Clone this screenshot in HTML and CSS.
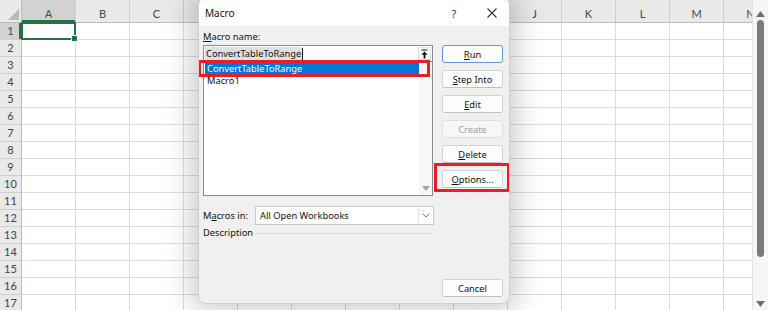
FILE: index.html
```html
<!DOCTYPE html>
<html lang="en">
<head>
    <meta charset="UTF-8">
    <meta name="viewport" content="width=device-width, initial-scale=1.0">
    <title>Macro</title>
    <link rel="stylesheet" href="styles.css">
</head>
<body>
    <div class="excel">
        <div class="sheet">
            <div class="corner">
                <svg width="12" height="12" viewBox="0 0 12 12"><polygon points="12,1 12,12 1,12" fill="#b9b9b9"/></svg>
            </div>
            <div class="col-heads">
                <div class="ch active">A</div>
                <div class="ch">B</div>
                <div class="ch">C</div>
                <div class="ch">D</div>
                <div class="ch">E</div>
                <div class="ch">F</div>
                <div class="ch">G</div>
                <div class="ch">H</div>
                <div class="ch">I</div>
                <div class="ch">J</div>
                <div class="ch">K</div>
                <div class="ch">L</div>
                <div class="ch">M</div>
                <div class="ch">N</div>
            </div>
            <div class="row-heads">
                <div class="rh active">1</div>
                <div class="rh">2</div>
                <div class="rh">3</div>
                <div class="rh">4</div>
                <div class="rh">5</div>
                <div class="rh">6</div>
                <div class="rh">7</div>
                <div class="rh">8</div>
                <div class="rh">9</div>
                <div class="rh">10</div>
                <div class="rh">11</div>
                <div class="rh">12</div>
                <div class="rh">13</div>
                <div class="rh">14</div>
                <div class="rh">15</div>
                <div class="rh">16</div>
                <div class="rh">17</div>
            </div>
            <div class="cells">
                <div class="active-cell"><span class="handle"></span></div>
            </div>
        </div>
        <div class="vscroll">
            <svg class="arr" width="9" height="6" viewBox="0 0 9 6"><polygon points="4.5,0 9,6 0,6" fill="#6e6e6e"/></svg>
            <div class="thumb"></div>
            <svg class="arr down" width="9" height="6" viewBox="0 0 9 6"><polygon points="0,0 9,0 4.5,6" fill="#6e6e6e"/></svg>
        </div>
    </div>

    <div class="dialog">
        <div class="titlebar">
            <span class="title">Macro</span>
            <div class="title-tools">
                <span class="tbtn help">?</span>
                <span class="tbtn">
                    <svg width="10" height="10" viewBox="0 0 10 10"><path d="M0.5 0.5 L9.5 9.5 M9.5 0.5 L0.5 9.5" stroke="#333" stroke-width="1.1" fill="none"/></svg>
                </span>
            </div>
        </div>
        <div class="dialog-body">
            <div class="left">
                <div class="label"><u>M</u>acro name:</div>
                <div class="name-input">
                    <span class="value"><span class="sel">ConvertTableToRange</span><span class="caret"></span></span>
                    <span class="pick">
                        <svg width="9" height="10" viewBox="0 0 9 10"><path d="M1.5 1 H7.5" stroke="#111" stroke-width="1.2"/><path d="M4.5 2.4 L1.4 5.8 H3.6 V9.5 H5.4 V5.8 H7.6 Z" fill="#111"/></svg>
                    </span>
                </div>
                <div class="macro-list">
                    <div class="items">
                        <div class="item selected marked">ConvertTableToRange</div>
                        <div class="item">Macro1</div>
                    </div>
                    <div class="lscroll">
                        <svg width="8" height="5" viewBox="0 0 8 5"><polygon points="0,0 8,0 4,5" fill="#a5a5a5"/></svg>
                    </div>
                </div>
                <div class="field">
                    <span class="field-label">M<u>a</u>cros in:</span>
                    <div class="select">
                        <span class="select-value">All Open Workbooks</span>
                        <span class="chevron">
                            <svg width="8" height="5" viewBox="0 0 8 5"><polyline points="0.5,0.5 4,4 7.5,0.5" stroke="#777" stroke-width="1" fill="none"/></svg>
                        </span>
                    </div>
                </div>
                <div class="field desc">
                    <span class="field-label">Description</span>
                    <span class="rule"></span>
                </div>
            </div>
            <div class="buttons">
                <button class="btn default"><u>R</u>un</button>
                <button class="btn"><u>S</u>tep Into</button>
                <button class="btn"><u>E</u>dit</button>
                <button class="btn" disabled>Create</button>
                <button class="btn"><u>D</u>elete</button>
                <button class="btn marked"><u>O</u>ptions...</button>
                <button class="btn cancel">Cancel</button>
            </div>
        </div>
    </div>
</body>
</html>
```

FILE: styles.css
```css
html, body {
    margin: 0;
    padding: 0;
}
body {
    width: 768px;
    height: 310px;
    overflow: hidden;
    background-color: #fff;
    position: relative;
    font-family: "Noto Sans", "Open Sans", sans-serif;
}

/* spreadsheet behind the dialog */
.excel {
    display: grid;
    grid-template-columns: 752px 16px;
    height: 310px;
}
.sheet {
    display: grid;
    grid-template-columns: 22px 1fr;
    grid-template-rows: 23px 1fr;
    overflow: hidden;
}
.corner {
    background-color: #e9e9e9;
    border-right: 1px solid #bdbdbd;
    border-bottom: 1px solid #bdbdbd;
    display: flex;
    align-items: flex-end;
    justify-content: flex-end;
    padding: 0 2px 2px 0;
}
.col-heads {
    display: flex;
    background-color: #e9e9e9;
    border-bottom: 1px solid #bdbdbd;
    overflow: hidden;
}
.ch {
    flex: 0 0 54px;
    box-sizing: border-box;
    border-right: 1px solid #cdcdcd;
    text-align: center;
    padding-top: 7px;
    font-family: Lato, "Noto Sans", sans-serif;
    font-size: 11px;
    line-height: 14px;
    color: #444;
}
.ch.active {
    background-color: #d2d2d2;
    box-shadow: inset 0 -2px 0 #217346;
    color: #1e5e3a;
}
.row-heads {
    display: flex;
    flex-direction: column;
    background-color: #e9e9e9;
    border-right: 1px solid #bdbdbd;
}
.rh {
    flex: 0 0 17px;
    box-sizing: border-box;
    border-bottom: 1px solid #d0d0d0;
    text-align: center;
    font-family: Lato, "Noto Sans", sans-serif;
    font-size: 11px;
    line-height: 16px;
    color: #444;
}
.rh.active {
    background-color: #d2d2d2;
    box-shadow: inset -2px 0 0 #217346;
    color: #1e5e3a;
}
.cells {
    position: relative;
    background-color: #fff;
    background-image:
        linear-gradient(to left, #dcdcdc 1px, transparent 1px),
        linear-gradient(to top, #dcdcdc 1px, transparent 1px);
    background-size: 54px 17px;
}
.active-cell {
    position: absolute;
    left: -1px;
    top: -1px;
    width: 51px;
    height: 14px;
    border: 2px solid #217346;
}
.handle {
    position: absolute;
    right: -4px;
    bottom: -4px;
    width: 5px;
    height: 5px;
    background-color: #217346;
    border: 1px solid #fff;
}
.vscroll {
    background-color: #f6f6f6;
    border-left: 1px solid #e3e3e3;
    display: flex;
    flex-direction: column;
    align-items: center;
    padding: 11px 0 3px;
}
.thumb {
    width: 7px;
    flex: 0 0 237px;
    margin-top: 3px;
    border-radius: 4px;
    background-color: #7b7b7b;
}
.arr.down {
    margin-top: auto;
}

/* the Macro dialog */
.dialog {
    position: absolute;
    left: 198px;
    top: -3px;
    width: 312px;
    height: 307px;
    box-sizing: border-box;
    background-color: #f0f0f0;
    border: 1px solid #cfcfcf;
    border-radius: 8px;
    box-shadow: 0 0 28px 7px rgba(0, 0, 0, 0.2);
    display: flex;
    flex-direction: column;
    overflow: hidden;
    font-size: 9.3px;
    color: #111;
}
.titlebar {
    flex: 0 0 28px;
    background-color: #fff;
    display: flex;
    align-items: center;
    padding-left: 6px;
}
.title {
    font-size: 10px;
    padding-top: 1px;
}
.title-tools {
    margin-left: auto;
    display: flex;
    gap: 8px;
    margin-right: 2px;
    padding-top: 2px;
}
.tbtn {
    width: 30px;
    display: flex;
    justify-content: center;
    align-items: center;
}
.help {
    font-size: 11px;
    color: #333;
}
.dialog-body {
    flex: 1;
    display: grid;
    grid-template-columns: 230px 61px;
    column-gap: 9px;
    padding: 0 7px 6px 4px;
}
.left {
    display: flex;
    flex-direction: column;
}
.label {
    margin-top: 4px;
    line-height: 14px;
    height: 15px;
}
u {
    text-decoration-thickness: 1px;
    text-underline-offset: 1px;
}
.name-input {
    height: 17px;
    box-sizing: border-box;
    background-color: #fff;
    border: 1px solid #8a8a8a;
    display: flex;
    align-items: center;
    padding-left: 1px;
}
.value {
    display: flex;
    align-items: center;
}
.sel {
    background-color: #e0e0e0;
    padding: 0 1px;
    line-height: 13px;
}
.caret {
    width: 1px;
    height: 12px;
    background-color: #222;
}
.pick {
    margin-left: auto;
    width: 13px;
    height: 13px;
    margin-right: 1px;
    box-sizing: border-box;
    border: 1px solid #e0e0e0;
    background-color: #fafafa;
    display: flex;
    align-items: center;
    justify-content: center;
}
.macro-list {
    margin-top: -1px;
    height: 135px;
    box-sizing: border-box;
    background-color: #fff;
    border: 1px solid #8a8a8a;
    display: flex;
}
.items {
    flex: 1;
    padding: 1px 0 0 1px;
}
.item {
    height: 12px;
    line-height: 12px;
    padding-left: 2px;
}
.item.selected {
    background-color: #0078d7;
    color: #fff;
}
.marked {
    position: relative;
}
.item.marked::after {
    content: "";
    position: absolute;
    left: -7px;
    top: -3px;
    right: -11px;
    bottom: -2px;
    border: 3px solid #ec1c24;
}
.lscroll {
    flex: 0 0 13px;
    background-color: #f7f7f7;
    display: flex;
    align-items: flex-end;
    justify-content: center;
    padding-bottom: 4px;
}
.field {
    display: flex;
    align-items: center;
    margin-top: 10px;
}
.field-label {
    flex: 0 0 52px;
}
.select {
    flex: 0 0 179px;
    height: 19px;
    box-sizing: border-box;
    background-color: #fff;
    border: 1px solid #c9c9c9;
    display: flex;
    align-items: center;
}
.select-value {
    padding-left: 4px;
    flex: 1;
}
.chevron {
    width: 14px;
    height: 15px;
    border-left: 1px solid #e2e2e2;
    display: flex;
    align-items: center;
    justify-content: center;
}
.field.desc {
    margin-top: 1px;
    line-height: 14px;
}
.rule {
    flex: 1;
    height: 1px;
    background-color: #dcdcdc;
}
.buttons {
    display: flex;
    flex-direction: column;
    gap: 7px;
    padding-top: 19px;
}
.btn {
    height: 18px;
    box-sizing: border-box;
    padding: 0;
    background-color: #fdfdfd;
    border: 1px solid #d3d3d3;
    border-bottom-color: #c0c0c0;
    border-radius: 3px;
    font-family: inherit;
    font-size: 9.3px;
    color: #111;
    line-height: 15px;
}
.btn.default {
    border-color: #5b9bd5;
}
.btn:disabled {
    color: #9d9d9d;
    background-color: #f7f7f7;
    border-color: #e0e0e0;
}
.btn.marked::after {
    content: "";
    position: absolute;
    left: -9px;
    top: -8px;
    right: -8px;
    bottom: -5px;
    border: 3px solid #ec1c24;
}
.btn.cancel {
    margin-top: auto;
}
```
